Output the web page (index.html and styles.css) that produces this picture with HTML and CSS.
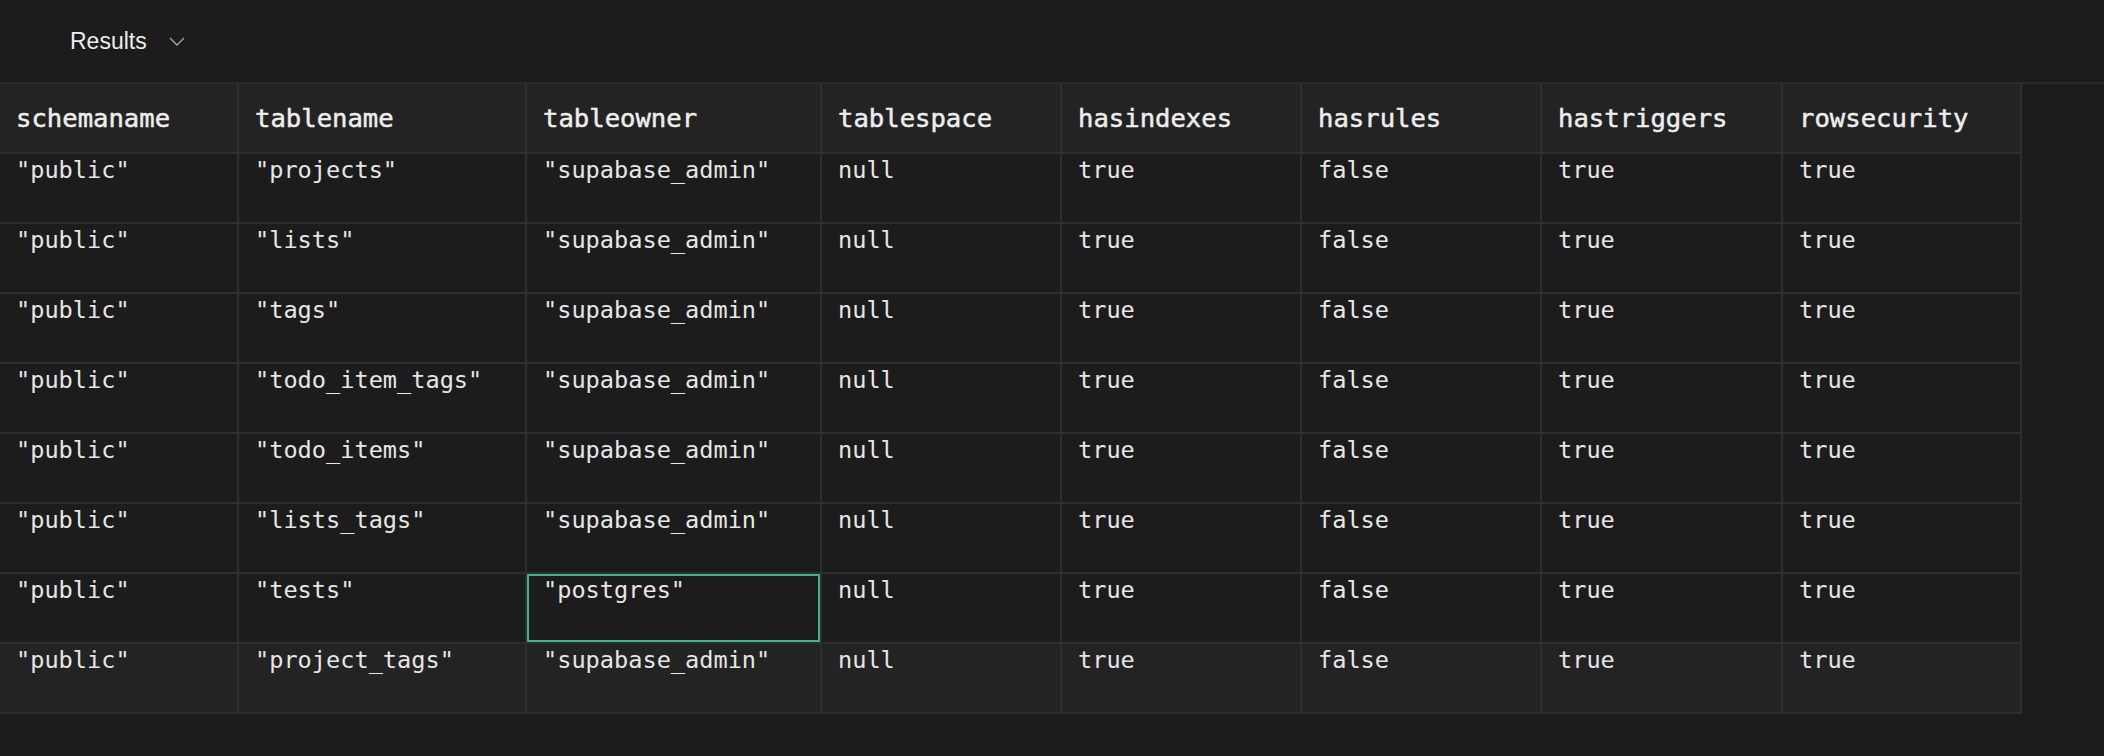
FILE: index.html
```html
<!DOCTYPE html>
<html>
<head>
<meta charset="utf-8">
<link rel="stylesheet" href="styles.css">
</head>
<body>
<div class="topbar">
  <button class="results-btn">
    <span class="results-label">Results</span>
    <svg class="chev" width="16" height="9" viewBox="0 0 16 9"><path d="M1 1 L8 8 L15 1" fill="none" stroke="#a3a3a3" stroke-width="1.4"/></svg>
  </button>
</div>
<div class="grid">
  <div class="cell head">schemaname</div>
  <div class="cell head">tablename</div>
  <div class="cell head">tableowner</div>
  <div class="cell head">tablespace</div>
  <div class="cell head">hasindexes</div>
  <div class="cell head">hasrules</div>
  <div class="cell head">hastriggers</div>
  <div class="cell head">rowsecurity</div>

  <div class="cell">"public"</div><div class="cell">"projects"</div><div class="cell">"supabase_admin"</div><div class="cell">null</div><div class="cell">true</div><div class="cell">false</div><div class="cell">true</div><div class="cell">true</div>
  <div class="cell">"public"</div><div class="cell">"lists"</div><div class="cell">"supabase_admin"</div><div class="cell">null</div><div class="cell">true</div><div class="cell">false</div><div class="cell">true</div><div class="cell">true</div>
  <div class="cell">"public"</div><div class="cell">"tags"</div><div class="cell">"supabase_admin"</div><div class="cell">null</div><div class="cell">true</div><div class="cell">false</div><div class="cell">true</div><div class="cell">true</div>
  <div class="cell">"public"</div><div class="cell">"todo_item_tags"</div><div class="cell">"supabase_admin"</div><div class="cell">null</div><div class="cell">true</div><div class="cell">false</div><div class="cell">true</div><div class="cell">true</div>
  <div class="cell">"public"</div><div class="cell">"todo_items"</div><div class="cell">"supabase_admin"</div><div class="cell">null</div><div class="cell">true</div><div class="cell">false</div><div class="cell">true</div><div class="cell">true</div>
  <div class="cell">"public"</div><div class="cell">"lists_tags"</div><div class="cell">"supabase_admin"</div><div class="cell">null</div><div class="cell">true</div><div class="cell">false</div><div class="cell">true</div><div class="cell">true</div>
  <div class="cell">"public"</div><div class="cell">"tests"</div><div class="cell selected">"postgres"</div><div class="cell">null</div><div class="cell">true</div><div class="cell">false</div><div class="cell">true</div><div class="cell">true</div>
  <div class="cell hover">"public"</div><div class="cell hover">"project_tags"</div><div class="cell hover">"supabase_admin"</div><div class="cell hover">null</div><div class="cell hover">true</div><div class="cell hover">false</div><div class="cell hover">true</div><div class="cell hover">true</div>
</div>
</body>
</html>
```
FILE: styles.css
```css
html, body {
  margin: 0;
  padding: 0;
  background: #1c1c1c;
  height: 100%;
}
body {
  color: #ededed;
  font-family: "DejaVu Sans Mono", monospace;
  overflow: hidden;
}
.topbar {
  height: 82px;
  border-bottom: 2px solid #2a2a2a;
  display: flex;
  align-items: center;
  padding-left: 70px;
}
.results-btn {
  background: none;
  border: none;
  padding: 0;
  display: flex;
  align-items: center;
  gap: 22px;
  color: #ededed;
  font-family: "Liberation Sans", Arial, sans-serif;
  font-size: 23px;
  cursor: pointer;
}
.results-label {
  line-height: 28px;
}
.chev {
  display: block;
  margin-top: 1px;
}
.grid {
  display: grid;
  grid-template-columns: 239px 288px 295px 240px 240px 240px 241px 239px;
  grid-auto-rows: 70px;
  width: 2022px;
}
.cell {
  box-sizing: border-box;
  border-right: 2px solid #2e2e2e;
  border-bottom: 2px solid #2e2e2e;
  padding: 2px 16px 0 16px;
  font-size: 23.6px;
  line-height: 28px;
  color: #e6e6e6;
  white-space: nowrap;
  overflow: hidden;
  background: #1c1c1c;
}
.head {
  background: #232323;
  font-size: 25.6px;
  font-weight: normal;
  -webkit-text-stroke: 0.5px #ededed;
  line-height: 30px;
  padding-top: 0;
  display: flex;
  align-items: center;
  color: #ededed;
}
.hover {
  background: #232323;
}
.selected {
  box-shadow: inset 0 0 0 2px #3bb488;
}
```
